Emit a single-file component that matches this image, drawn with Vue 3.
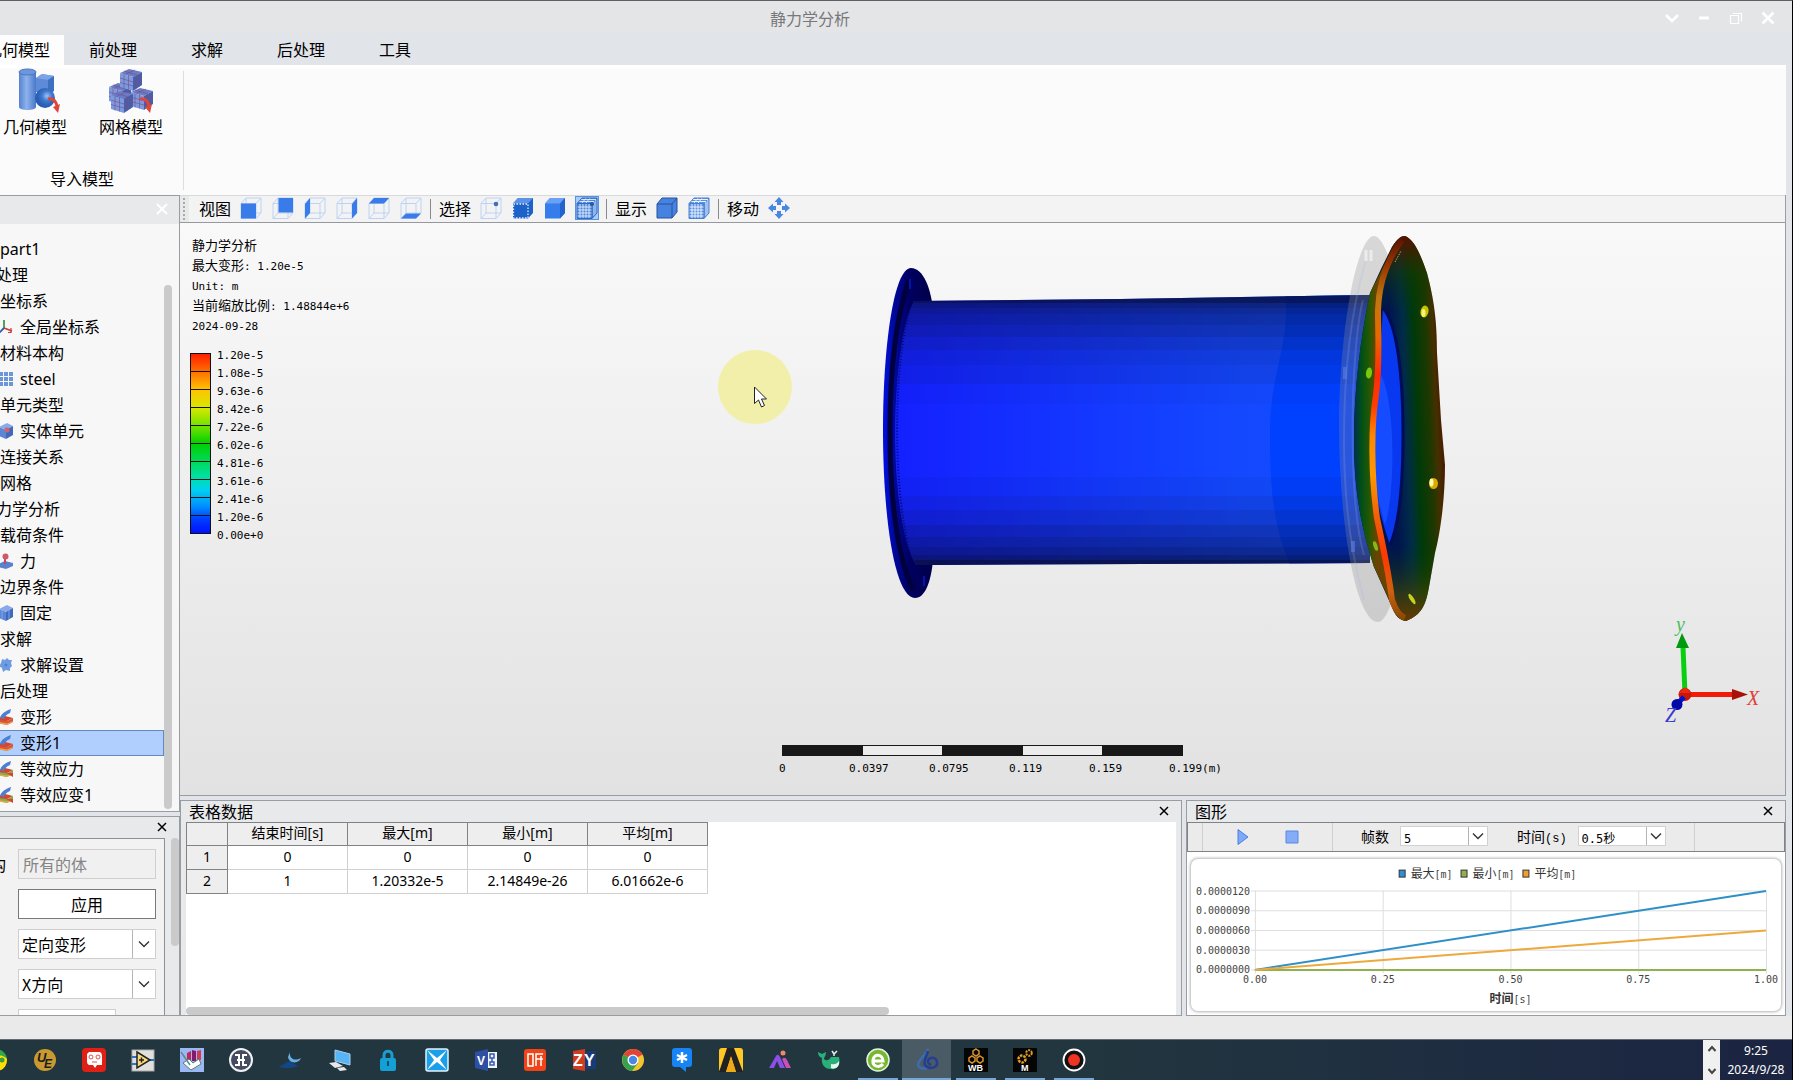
<script setup>
import { ref } from 'vue';

const tabs = ['几何模型', '前处理', '求解', '后处理', '工具'];
const activeTab = ref('几何模型');

const cubeViews = [
  { id: 'front', label: '前视图', face: 'M1 6.5H16V21.5H1Z' },
  { id: 'back', label: '后视图', face: 'M6.5 1H21V15.5H6.5Z' },
  { id: 'left', label: '左视图', face: 'M1 7L6 1V16L1 21.5Z' },
  { id: 'right', label: '右视图', face: 'M16 7L21 1V16L16 21.5Z' },
  { id: 'top', label: '俯视图', face: 'M1 6.5L6 1H21L16 6.5Z' },
  { id: 'bottom', label: '仰视图', face: 'M1 21.5L6 16.5H21L16 21.5Z' },
];

const tree = [
  { text: 'part1', level: 2 },
  { text: '前处理', level: 1 },
  { text: '坐标系', level: 2 },
  { text: '全局坐标系', level: 3, icon: 'axis' },
  { text: '材料本构', level: 2 },
  { text: 'steel', level: 3, icon: 'grid' },
  { text: '单元类型', level: 2 },
  { text: '实体单元', level: 3, icon: 'solid' },
  { text: '连接关系', level: 2 },
  { text: '网格', level: 2 },
  { text: '静力学分析', level: 1 },
  { text: '载荷条件', level: 2 },
  { text: '力', level: 3, icon: 'force' },
  { text: '边界条件', level: 2 },
  { text: '固定', level: 3, icon: 'fixed' },
  { text: '求解', level: 2 },
  { text: '求解设置', level: 3, icon: 'gear' },
  { text: '后处理', level: 2 },
  { text: '变形', level: 3, icon: 'result' },
  { text: '变形1', level: 3, icon: 'result' },
  { text: '等效应力', level: 3, icon: 'rainbow' },
  { text: '等效应变1', level: 3, icon: 'rainbow' },
];
const selected = ref('变形1');

const info = [
  { label: '静力学分析', value: '' },
  { label: '最大变形', value: ': 1.20e-5' },
  { label: '', value: 'Unit: m' },
  { label: '当前缩放比例', value: ': 1.48844e+6' },
  { label: '', value: '2024-09-28' },
];

const legend = ['1.20e-5', '1.08e-5', '9.63e-6', '8.42e-6', '7.22e-6', '6.02e-6', '4.81e-6', '3.61e-6', '2.41e-6', '1.20e-6', '0.00e+0'];

// shading strips of the pipe wall: top, height, darkness
const bands = [
  [295, 8, 0.78],
  [303, 5, 0.6],
  [308, 6, 0.5],
  [314, 11, 0.42],
  [325, 12, 0.34],
  [337, 13, 0.25],
  [350, 15, 0.17],
  [365, 19, 0.11],
  [384, 20, 0.03],
  [477, 19, 0.05],
  [496, 14, 0.13],
  [510, 15, 0.22],
  [525, 12, 0.33],
  [537, 10, 0.42],
  [547, 8, 0.52],
  [555, 5, 0.65],
  [560, 8, 0.82],
];

const scaleLabels = ['0.0397', '0.0795', '0.119', '0.159', '0.199(m)'];

const columns = ['结束时间[s]', '最大[m]', '最小[m]', '平均[m]'];
const rows = [
  ['0', '0', '0', '0'],
  ['1', '1.20332e-5', '2.14849e-26', '6.01662e-6'],
];

const series = [
  { name: '最大[m]', color: '#2f8fd0', x: 208 },
  { name: '最小[m]', color: '#8fb150', x: 270 },
  { name: '平均[m]', color: '#eda02f', x: 332 },
];
const yTicks = ['0.0000120', '0.0000090', '0.0000060', '0.0000030', '0.0000000'];
const xTicks = ['0.00', '0.25', '0.50', '0.75', '1.00'];

const scope = ref('所有的体');
const frames = ref('5');
const duration = ref('0.5秒');
const kind = ref('定向变形');
const direction = ref('X方向');
</script>

<template>
  <div class="app">
    <header class="titlebar">
      <h1>静力学分析</h1>
      <div class="window-buttons">
        <button type="button" aria-label="收起"><svg viewBox="0 0 16 16"><path d="M2 5L8 11L14 5" stroke-width="2.6" /></svg></button>
        <button type="button" aria-label="最小化"><svg viewBox="0 0 16 16"><path d="M3 8H13" stroke-width="3" /></svg></button>
        <button type="button" aria-label="还原"><svg viewBox="0 0 16 16"><path d="M2.5 5.5h8v8h-8zM5 3.5h8.500v8" stroke-width="1.200" /></svg></button>
        <button type="button" aria-label="关闭"><svg viewBox="0 0 16 16"><path d="M2.500 2.500L13.500 13.500M13.500 2.500L2.500 13.500" stroke-width="2.600" /></svg></button>
      </div>
    </header>

    <nav class="tabs">
      <button
        v-for="tab in tabs"
        :key="tab"
        type="button"
        class="tab"
        :class="{ active: tab === activeTab }"
        @click="activeTab = tab"
      >{{ tab }}</button>
    </nav>

    <section class="ribbon">
      <div class="ribbon-group">
        <div class="ribbon-items">
          <button type="button" class="ribbon-item">
            <svg viewBox="0 0 46 48">
              <defs>
                <linearGradient id="cyl"><stop offset="0" stop-color="#5582cf" /><stop offset=".45" stop-color="#8db2ec" /><stop offset="1" stop-color="#4a78c8" /></linearGradient>
                <radialGradient id="ball" cx=".6" cy=".4"><stop offset="0" stop-color="#9cc4f5" /><stop offset=".5" stop-color="#3f78cc" /><stop offset="1" stop-color="#285eb4" /></radialGradient>
              </defs>
              <path d="M20 11L26 7L38 9V24L32 27L20 25Z" fill="#5d8bd8" />
              <path d="M20 11L26 7L38 9L32 13Z" fill="#7ba3e6" />
              <path d="M32 13L38 9V24L32 27Z" fill="#3f6fc0" />
              <path d="M3 5V40C3 44 20 44 20 40V5Z" fill="url(#cyl)" />
              <ellipse cx="11.500" cy="5" rx="8.500" ry="3" fill="#6c97dc" stroke="#4a76c2" />
              <circle cx="29" cy="31" r="10" fill="url(#ball)" />
              <path d="M32 32C38 31 40 35 41 39" fill="none" stroke="#e0453a" stroke-width="3" />
              <path d="M37 40L44 37L42 46Z" fill="#e0453a" />
            </svg>
            <span>几何模型</span>
          </button>
          <button type="button" class="ribbon-item">
            <svg viewBox="0 0 46 48">
              <g v-for="c in [[1, 16], [12, 2], [23, 21], [3, 24]]" :key="c.join()" :transform="`translate(${c[0]} ${c[1]})`">
                <path d="M0 4L9 0L22 3L13 8Z" fill="#6a7cc4" />
                <path d="M0 4L13 8V22L0 18Z" fill="#7b9ae0" />
                <path d="M13 8L22 3V16L13 22Z" fill="#4560ac" />
                <path d="M4 5V19.500M8.500 6V20.500M0 9L13 13L22 8M0 13.500L13 17L22 12M16 6V20M19 5V18M4 2L17 6M5 5.500L15 1" fill="none" stroke="#7a4a86" stroke-width=".8" opacity=".75" />
              </g>
              <path d="M32 32C38 31 40 35 41 39" fill="none" stroke="#e0453a" stroke-width="3" />
              <path d="M37 40L44 37L42 46Z" fill="#e0453a" />
            </svg>
            <span>网格模型</span>
          </button>
        </div>
        <div class="ribbon-caption">导入模型</div>
      </div>
    </section>

    <main class="workspace">
      <aside class="side">
        <section class="dock tree-dock">
          <header class="dock-title pale">
            <button type="button" class="close" aria-label="关闭模型树"><svg viewBox="0 0 12 12"><path d="M1 1L11 11M11 1L1 11" /></svg></button>
          </header>
          <div class="tree-area">
            <ul class="tree">
              <li
                v-for="node in tree"
                :key="node.text + node.level"
                :class="['level-' + node.level, { selected: node.text === selected }]"
                @click="selected = node.text"
              >
                <svg v-if="node.icon" viewBox="0 0 16 16">
                  <g v-if="node.icon === 'axis'" fill="none" stroke-width="1.800">
                    <path d="M6 1V9" stroke="#3a9a50" /><path d="M6 9L14 12" stroke="#cc3c34" /><path d="M6 9L1 14" stroke="#3858b8" />
                    <path d="M13 9V13.500H10" stroke="#cc3c34" stroke-width="1.200" />
                  </g>
                  <path v-else-if="node.icon === 'grid'" d="M1 1h4v4h-4zM6 1h4v4h-4zM11 1h4v4h-4zM1 6h4v4h-4zM6 6h4v4h-4zM11 6h4v4h-4zM1 11h4v4h-4zM6 11h4v4h-4zM11 11h4v4h-4z" fill="#6d96d8" />
                  <g v-else-if="node.icon === 'solid' || node.icon === 'fixed'">
                    <path d="M1 4L9 0L15 3L8 7Z" fill="#88aae8" /><path d="M1 4L8 7V16L1 13Z" fill="#5b86d6" /><path d="M8 7L15 3V12L8 16Z" fill="#4168bc" />
                    <circle v-if="node.icon === 'solid'" cx="9" cy="7" r="2.500" fill="#d4606c" />
                    <path v-else d="M4 5V14M11 5V14" stroke="#7fa5ea" />
                  </g>
                  <g v-else-if="node.icon === 'force'">
                    <path d="M0 11L7 8L15 10V13L8 16L0 14Z" fill="#5a82ce" /><path d="M7 5V11" stroke="#c04c5c" stroke-width="2" /><circle cx="7.500" cy="3.500" r="3" fill="#d05868" />
                  </g>
                  <g v-else-if="node.icon === 'gear'">
                    <path d="M4 2L7 3L9 1L11 3L14 3L13 6L14 9L12 11L12 14L8 13L5 15L4 11L1 9L3 6Z" fill="#6f9ce0" /><circle cx="8" cy="8" r="1.500" fill="#4f7fcf" />
                  </g>
                  <g v-else>
                    <path d="M0 9L7 7L15 9L9 12L0 12Z" fill="#d8442e" />
                    <path d="M0 11L9 12L15 9V13L9 16L0 14Z" :fill="node.icon === 'result' ? '#d8583a' : '#7fae4c'" />
                    <path d="M0 13L9 14.500L15 12V13L9 16L0 14.500Z" fill="#e8a850" />
                    <path v-if="node.icon === 'rainbow'" d="M8 12L15 12V16Z" fill="#d8442e" />
                    <path d="M2 9C3 5 7 2 13 0L12 4C9 5 7 7 6 10Z" fill="#4f7fcf" />
                  </g>
                </svg>
                <span>{{ node.text }}</span>
              </li>
            </ul>
            <div class="tree-scroll"></div>
          </div>
        </section>

        <section class="dock props-dock">
          <header class="dock-title">
            <button type="button" class="close" aria-label="关闭属性"><svg viewBox="0 0 12 12"><path d="M2 2L10 10M10 2L2 10" /></svg></button>
          </header>
          <div class="props-area">
            <form class="props" @submit.prevent>
              <label for="scope">结构</label>
              <input id="scope" v-model="scope" class="field" type="text" disabled />
              <button type="submit" class="field apply">应用</button>
              <div class="combo field">
                <select v-model="kind" aria-label="变形类型"><option>定向变形</option></select>
                <svg viewBox="0 0 14 14"><path d="M2 4.500L7 9.500L12 4.500" /></svg>
              </div>
              <div class="combo field">
                <select v-model="direction" aria-label="方向"><option>X方向</option></select>
                <svg viewBox="0 0 14 14"><path d="M2 4.500L7 9.500L12 4.500" /></svg>
              </div>
              <input class="field short" type="text" aria-label="数值" />
            </form>
            <div class="props-scroll"></div>
          </div>
        </section>
      </aside>

      <div class="center">
        <section class="viewport">
          <div class="toolbar">
            <i class="grip"></i>
            <span class="tool-label">视图</span>
            <button v-for="view in cubeViews" :key="view.id" type="button" class="tool" :aria-label="view.label">
              <svg viewBox="0 0 22 22">
                <path class="wire" d="M1 6.500H16V21.500H1ZM6 1H21V16H6ZM1 6.500L6 1M16 6.500L21 1M16 21.500L21 16M1 21.500L6 16" />
                <path :d="view.face" fill="#3a7bea" />
              </svg>
            </button>
            <i class="divider"></i>
            <span class="tool-label">选择</span>
            <button type="button" class="tool" aria-label="选择点">
              <svg viewBox="0 0 22 22">
                <path class="wire" d="M1 6.500H16V21.500H1ZM6 1H21V16H6ZM1 6.500L6 1M16 6.500L21 1M16 21.500L21 16M1 21.500L6 16" />
                <circle cx="16" cy="7" r="2.300" fill="#3f6fc0" />
              </svg>
            </button>
            <button type="button" class="tool" aria-label="选择线">
              <svg viewBox="0 0 22 22">
                <path d="M1 6.500L6 1H21V16L16 21.500H1Z" fill="#1d62c8" /><path d="M1 6.500L6 1H21L16 6.500Z" fill="#5c93e6" />
                <path d="M1.500 7H16V21H1.500Z" fill="none" stroke="#e6f0ff" stroke-width="1.300" stroke-dasharray="1.500 1.500" />
              </svg>
            </button>
            <button type="button" class="tool" aria-label="选择面">
              <svg viewBox="0 0 22 22">
                <path d="M1 6.500L6 1H21V16L16 21.500H1Z" fill="#357ced" /><path d="M1 6.500L6 1H21L16 6.500Z" fill="#6ba0f4" /><path d="M16 6.500L21 1V16L16 21.500Z" fill="#2563cc" />
              </svg>
            </button>
            <button type="button" class="tool pressed" aria-label="选择体">
              <svg viewBox="0 0 22 22">
                <path d="M1 6.500L6 1H21V16L16 21.500H1Z" fill="#4d86dd" />
                <path d="M4 7V21M7 7V21M10 7V21M13 7V21M1 10H16M1 13H16M1 16H16M1 19H16M3 4.500H18M5 2.500H20M18 5V19M20 3V17M6 6L10 1M10 6L14 1" fill="none" stroke="#e3eefc" stroke-width=".9" />
                <path d="M1 6.500L6 1H21V16L16 21.500H1ZM1 6.500H16V21.500" fill="none" stroke="#2f6bc7" /><circle cx="16" cy="7" r="2" fill="#2458a8" />
              </svg>
            </button>
            <i class="divider"></i>
            <span class="tool-label">显示</span>
            <button type="button" class="tool" aria-label="实体显示">
              <svg viewBox="0 0 22 22"><path d="M1 7L6 1H21V15L16 21H1Z" fill="#4682e0" stroke="#28539c" stroke-linejoin="round" /><path d="M1 7H16V21M16 7L21 1" fill="none" stroke="#28539c" /></svg>
            </button>
            <button type="button" class="tool" aria-label="网格显示">
              <svg viewBox="0 0 22 22">
                <path d="M1 6.500L6 1H21V16L16 21.500H1Z" fill="#5b90e2" />
                <path d="M4 7V21M7 7V21M10 7V21M13 7V21M1 10H16M1 13H16M1 16H16M1 19H16M3 4.500H18M5 2.500H20M18 5V19M20 3V17M6 6L10 1M10 6L14 1" fill="none" stroke="#e9f2fe" />
                <path d="M1 6.500L6 1H21V16L16 21.500H1ZM1 6.500H16V21.500" fill="none" stroke="#4a80d2" />
              </svg>
            </button>
            <i class="divider"></i>
            <span class="tool-label">移动</span>
            <button type="button" class="tool" aria-label="平移">
              <svg viewBox="0 0 22 22"><path d="M11 0L15.500 5H13V8H9V5H6.500ZM11 22L15.500 17H13V14H9V17H6.500ZM0 11L5 6.500V9H8V13H5V15.500ZM22 11L17 6.500V9H14V13H17V15.500Z" fill="#4a86e4" /></svg>
            </button>
          </div>

          <div class="canvas">
            <svg class="scene" viewBox="180 223 1605 572" preserveAspectRatio="xMidYMid meet">
              <defs>
                <linearGradient id="wall"><stop offset="0" stop-color="#1420ff" /><stop offset=".7" stop-color="#1448ff" /><stop offset="1" stop-color="#1450ff" /></linearGradient>
                <linearGradient id="flangeEdge" gradientUnits="userSpaceOnUse" x1="883" x2="935" y1="0" y2="0"><stop offset="0" stop-color="#0010e8" /><stop offset=".2" stop-color="#0008a0" /><stop offset=".5" stop-color="#000060" /><stop offset="1" stop-color="#000048" /></linearGradient>
                <linearGradient id="face" gradientUnits="userSpaceOnUse" x1="1394" x2="1444" y1="430" y2="428"><stop offset="0" stop-color="#001450" /><stop offset=".26" stop-color="#002c48" /><stop offset=".48" stop-color="#003a08" /><stop offset=".72" stop-color="#1e3800" /><stop offset=".86" stop-color="#453000" /><stop offset="1" stop-color="#4a1600" /></linearGradient>
                <linearGradient id="ends" x1="0" x2="0" y1="0" y2="1"><stop offset="0" stop-color="#5a1000" /><stop offset=".1" stop-color="#183800" stop-opacity=".5" /><stop offset=".2" stop-color="#003a08" stop-opacity="0" /><stop offset=".8" stop-color="#003a08" stop-opacity="0" /><stop offset=".93" stop-color="#404400" stop-opacity=".7" /><stop offset="1" stop-color="#6a3800" /></linearGradient>
                <linearGradient id="lip" gradientUnits="userSpaceOnUse" x1="1354" x2="1376" y1="0" y2="0"><stop offset="0" stop-color="#00304c" /><stop offset=".35" stop-color="#005018" /><stop offset=".75" stop-color="#2c5800" /><stop offset="1" stop-color="#684400" /></linearGradient>
                <linearGradient id="rim" gradientUnits="userSpaceOnUse" x1="0" x2="0" y1="236" y2="621"><stop offset="0" stop-color="#5a1000" /><stop offset=".08" stop-color="#983800" /><stop offset=".16" stop-color="#c07810" /><stop offset=".26" stop-color="#e86800" /><stop offset=".36" stop-color="#ff2a08" /><stop offset=".44" stop-color="#ff3c00" /><stop offset=".52" stop-color="#ff8800" /><stop offset=".62" stop-color="#ff9800" /><stop offset=".73" stop-color="#f06008" /><stop offset=".83" stop-color="#ff3800" /><stop offset=".92" stop-color="#d06010" /><stop offset="1" stop-color="#804800" /></linearGradient>
                <clipPath id="pipe"><path d="M914 301L1120 299L1370 295V563L934 565H916C903 545 895 490 895 430C896 370 903 320 914 301Z" /></clipPath>
              </defs>

              <path d="M911 268C923 268 931 288 933 310V560C931 582 925 598 915 598C895 598 883 520 883 430C883 345 894 268 911 268Z" fill="url(#flangeEdge)" />
              <path d="M909 280C895 320 890 370 890 430C890 500 897 555 913 590" fill="none" stroke="#00003c" stroke-width="5" />
              <path d="M910 279V289M924 576V586" stroke="#0012b0" stroke-width="2" />
              <g clip-path="url(#pipe)">
                <rect x="890" y="290" width="490" height="280" fill="url(#wall)" />
                <path d="M1285 290C1291 345 1270 370 1270 433C1270 500 1275 530 1292 570H1380V290Z" fill="#0040ff" />
                <rect v-for="band in bands" :key="band[0]" x="890" :y="band[0]" width="490" :height="band[1]" fill="#080c30" :opacity="band[2]" />
                <path d="M912 303C892 360 892 500 913 563" fill="none" stroke="#000a70" stroke-width="2" stroke-dasharray="1 2" />
              </g>

              <path d="M1374 236C1390 236 1413 330 1413 430C1413 530 1394 622 1378 622C1355 622 1339 520 1339 425C1339 330 1357 236 1374 236Z" fill="#8c8c90" opacity=".3" />
              <path d="M1366 260C1348 320 1344 390 1344 440C1344 500 1350 550 1364 600M1363 300C1350 350 1348 500 1364 555" fill="none" stroke="#a0b4e8" stroke-width="2" opacity=".2" />
              <path d="M1366 250V261M1371 250V261" stroke="#ececec" stroke-width="3" />
              <path d="M1345 367V379M1353 541V552" stroke="#5a80e0" stroke-width="4" opacity=".6" />

              <path d="M1405 236C1413 239 1419 250 1427 273C1434 300 1437 320 1437 353L1441 420L1445 465C1445 500 1440 535 1435 553L1429 587C1426 604 1422 615 1406 621C1397 620 1394 612 1392 607L1374 567C1364 535 1354 500 1354 440C1354 390 1360 340 1370 293L1382 267L1392 247C1397 239 1401 236 1405 236Z" fill="url(#face)" />
              <path d="M1405 236C1413 239 1419 250 1427 273C1434 300 1437 320 1437 353L1441 420L1445 465C1445 500 1440 535 1435 553L1429 587C1426 604 1422 615 1406 621C1397 620 1394 612 1392 607L1374 567C1364 535 1354 500 1354 440C1354 390 1360 340 1370 293L1382 267L1392 247C1397 239 1401 236 1405 236Z" fill="url(#ends)" />
              <path d="M1392 250L1370 293C1360 340 1354 390 1354 440C1354 500 1364 535 1374 567L1392 605C1390 570 1372 520 1371 460C1370 410 1378 390 1377 340C1376 300 1384 270 1392 250Z" fill="url(#lip)" />
              <path d="M1383 308C1398 325 1403 380 1403 433C1403 490 1399 525 1390 545C1382 520 1374 500 1373 450C1374 420 1378 395 1379 370Z" fill="#0838f0" />
              <path d="M1381 375C1395 400 1396 490 1385 525C1378 500 1374 480 1374 450C1374 420 1378 400 1381 375Z" fill="#164cff" />
              <path d="M1383 308C1398 325 1403 380 1403 433C1403 490 1399 525 1390 545" fill="none" stroke="#000c58" stroke-width="3" />
              <path d="M1402 240C1390 256 1379 280 1378 310C1378 335 1380 365 1376 395C1371 425 1371 475 1377 518C1385 555 1389 575 1392 600C1395 609 1400 616 1405 618" fill="none" stroke="url(#rim)" stroke-width="6" />
              <path d="M1395 262L1401 251" stroke="#d8c050" stroke-dasharray="1 1" />
              <ellipse cx="1424.500" cy="311.500" rx="4" ry="6" fill="#c8c000" transform="rotate(12 1424.500 311.500)" />
              <ellipse cx="1423.500" cy="313" rx="2" ry="4" fill="#f4f478" />
              <ellipse cx="1433.500" cy="483.500" rx="4.500" ry="5.500" fill="#e0a800" />
              <ellipse cx="1431.500" cy="482.500" rx="2" ry="4" fill="#ffffb0" />
              <ellipse cx="1369" cy="373" rx="3" ry="5.500" fill="#78c810" transform="rotate(8 1369 373)" />
              <ellipse cx="1375.500" cy="546" rx="2" ry="5" fill="#88b818" transform="rotate(-18 1375.500 546)" />
              <ellipse cx="1412" cy="599" rx="2" ry="6" fill="#c8d020" transform="rotate(-32 1412 599)" />

              <circle cx="755" cy="387" r="37" fill="#f2efab" />
              <path d="M754.500 387V403.500L758.500 400L761.500 407L764.500 405.500L761.500 399H766.500Z" fill="#fff" stroke="#222" />

              <g>
                <path d="M1683 647L1685 694" stroke="#08d010" stroke-width="5" />
                <path d="M1682 633L1689 648H1676Z" fill="#009a10" />
                <path d="M1685 694.500H1735" stroke="#f01c08" stroke-width="5" />
                <path d="M1732 689L1748 694.500L1732 700Z" fill="#a81008" />
                <circle cx="1685" cy="694.500" r="6.500" fill="#c81808" /><path d="M1679 693L1685 687L1691 693Z" fill="#f02810" />
                <path d="M1684 697L1677 704" stroke="#0014d0" stroke-width="5" />
                <circle cx="1677" cy="704.500" r="5.500" fill="#0008a8" />
                <text class="axis-name" x="1676" y="631" fill="#48c060">y</text>
                <text class="axis-name" x="1747" y="705" fill="#e04038">X</text>
                <text class="axis-name" x="1665" y="722" fill="#3838d0">Z</text>
              </g>

              <g>
                <rect x="782" y="745" width="401" height="11" fill="#181818" />
                <path d="M863 746H942V755H863ZM1023 746H1102V755H1023Z" fill="#ececec" />
                <text class="scale-text" x="779" y="772">0</text>
                <text v-for="(label, i) in scaleLabels" :key="label" class="scale-text" :x="849 + i * 80" y="772">{{ label }}</text>
              </g>
            </svg>

            <div class="overlay">
              <p v-for="(line, i) in info" :key="i"><span>{{ line.label }}</span><b>{{ line.value }}</b></p>
              <div class="legend">
                <div class="ramp"><i v-for="n in 10" :key="n"></i></div>
                <ol><li v-for="value in legend" :key="value">{{ value }}</li></ol>
              </div>
            </div>
          </div>
        </section>

        <div class="bottom">
          <section class="dock table-dock">
            <header class="dock-title">
              <h2>表格数据</h2>
              <button type="button" class="close" aria-label="关闭表格数据"><svg viewBox="0 0 12 12"><path d="M2 2L10 10M10 2L2 10" /></svg></button>
            </header>
            <div class="table-area">
              <table>
                <thead>
                  <tr><th class="index"></th><th v-for="column in columns" :key="column">{{ column }}</th></tr>
                </thead>
                <tbody>
                  <tr v-for="(row, i) in rows" :key="i">
                    <th class="index">{{ i + 1 }}</th>
                    <td v-for="(cell, j) in row" :key="j">{{ cell }}</td>
                  </tr>
                </tbody>
              </table>
              <div class="table-scroll"></div>
            </div>
          </section>

          <section class="dock chart-dock">
            <header class="dock-title">
              <h2>图形</h2>
              <button type="button" class="close" aria-label="关闭图形"><svg viewBox="0 0 12 12"><path d="M2 2L10 10M10 2L2 10" /></svg></button>
            </header>
            <div class="player">
              <div class="player-buttons">
                <button type="button" aria-label="播放"><svg viewBox="0 0 18 18"><path d="M4 1.500L14 9L4 16.500Z" fill="#7ea8f8" stroke="#4a80e0" /></svg></button>
                <button type="button" aria-label="停止"><svg viewBox="0 0 18 18"><path d="M3 3H15V15H3Z" fill="#84acf8" stroke="#5a88e0" /></svg></button>
              </div>
              <div class="player-fields">
                <label for="frames">帧数</label>
                <div class="combo small">
                  <select id="frames" v-model="frames"><option>5</option></select>
                  <svg viewBox="0 0 14 14"><path d="M2 4.500L7 9.500L12 4.500" /></svg>
                </div>
                <label for="duration" class="second">时间<span>(s)</span></label>
                <div class="combo small">
                  <select id="duration" v-model="duration"><option>0.5秒</option></select>
                  <svg viewBox="0 0 14 14"><path d="M2 4.500L7 9.500L12 4.500" /></svg>
                </div>
              </div>
            </div>
            <div class="chart-card">
              <svg viewBox="0 0 591 151">
                <g v-for="s in series" :key="s.name">
                  <rect :x="s.x + 0.5" y="10.500" width="6" height="7" :fill="s.color" stroke="#333" />
                  <text :x="s.x + 12" y="18" class="legend-text">{{ s.name.slice(0, 2) }}<tspan class="mono">{{ s.name.slice(2) }}</tspan></text>
                </g>
                <g v-for="(tick, i) in yTicks" :key="tick">
                  <path :d="`M60 ${31.5 + i * 19.75}H576`" stroke="#dedede" />
                  <text class="mono" x="59" :y="35 + i * 19.75" text-anchor="end">{{ tick }}</text>
                </g>
                <g v-for="(tick, i) in xTicks" :key="tick">
                  <path :d="`M${64.5 + i * 128} 31V114`" stroke="#dedede" />
                  <text class="mono" :x="64 + i * 128" y="124" text-anchor="middle">{{ tick }}</text>
                </g>
                <path d="M64 110.500L576 31.500" stroke="#2f8fc8" stroke-width="2" />
                <path d="M64 110.500H576" stroke="#8fb150" stroke-width="2" />
                <path d="M64 110.500L576 71" stroke="#eda93c" stroke-width="2" />
                <text class="legend-text bold" x="320" y="144" text-anchor="middle">时间<tspan class="mono">[s]</tspan></text>
              </svg>
            </div>
          </section>
        </div>
      </div>
    </main>

    <div class="statusbar"></div>

    <footer class="taskbar">
      <div class="apps">
        <button type="button" aria-label="360"><svg viewBox="0 0 24 24"><circle cx="12" cy="12" r="11" fill="#2fa84c" /><path d="M4 14C10 6 18 6 23 11C23 18 19 23 12 23C8 22 5 19 4 14Z" fill="#ffe000" /><circle cx="18" cy="12" r="2.500" fill="#3c9c40" /></svg></button>
        <button type="button" aria-label="UltraEdit"><svg viewBox="0 0 24 24"><circle cx="12" cy="12" r="11" fill="#c89a30" /><text x="4" y="14" class="glyph italic" font-size="13">U</text><text x="11" y="20" class="glyph italic" font-size="12">E</text></svg></button>
        <button type="button" aria-label="笔记"><svg viewBox="0 0 24 24"><rect width="24" height="24" rx="4" fill="#e02014" /><path d="M7 4H18Q20 5 20 8V17H15L13 20L11 17H7Q5 16 5 14V6Z" fill="#fff" /><circle cx="9" cy="9" r="2" fill="none" stroke="#e05048" /><circle cx="16" cy="9" r="2" fill="none" stroke="#e05048" /><path d="M10 14H15" stroke="#e05048" /></svg></button>
        <button type="button" aria-label="LabVIEW"><svg viewBox="0 0 24 24"><rect x="1" y="2" width="22" height="21" fill="#e0e0dc" stroke="#aaa" /><path d="M1 9H6M1 16H6M17 12H23" stroke="#2a74c8" stroke-width="2" /><path d="M6 4L19 12L6 20Z" fill="#f8d878" stroke="#222" stroke-width="1.500" /><path d="M8 12h5M10.500 9.500v5" stroke="#222" stroke-width="1.500" /></svg></button>
        <button type="button" aria-label="书库"><svg viewBox="0 0 24 24"><rect width="24" height="24" fill="#9cb8f4" /><path d="M7 5L11 3V13L7 14Z" fill="#c02858" /><path d="M12 2L16 3V13H12Z" fill="#801c70" /><path d="M17 3L21 2V12H17Z" fill="#d83850" /><path d="M3 15L9 11L13 15L19 11L21 16L11 22Z" fill="#fff" stroke="#55806c" /><path d="M1 4L10 17" stroke="#608898" stroke-width="1.500" /></svg></button>
        <button type="button" aria-label="网络"><svg viewBox="0 0 24 24"><circle cx="12" cy="12" r="11" fill="#454c60" stroke="#f0f2f4" stroke-width="2" /><path d="M6 7H10V12M18 7H14V12M6 17H10V12M18 17H14V12M8 12H16" fill="none" stroke="#fff" stroke-width="2" /></svg></button>
        <button type="button" aria-label="雷鸟"><svg viewBox="0 0 24 24"><path d="M0 19C6 17 8 14 12 13L20 18C14 21 6 20 0 19Z" fill="#124684" /><path d="M12 4C11 10 16 14 23 10C21 16 11 16 10 9Z" fill="#6ab0e4" /></svg></button>
        <button type="button" aria-label="远程桌面"><svg viewBox="0 0 24 24"><path d="M8 2L23 6V17L8 13Z" fill="#58b4f4" stroke="#a8d0ec" /><path d="M2 15L9 14L16 18L8 20ZM10 20L17 19L20 22L13 23Z" fill="#e6e8ea" /></svg></button>
        <button type="button" aria-label="加密"><svg viewBox="0 0 24 24"><path d="M8 11V7C8 2 16 2 16 7V11" fill="none" stroke="#1a9ed0" stroke-width="3" /><rect x="4" y="10" width="16" height="13" rx="2" fill="#14a0d4" /><path d="M12 13V18" stroke="#0a5070" stroke-width="2" /></svg></button>
        <button type="button" aria-label="xmind"><svg viewBox="0 0 24 24"><rect x="1" y="1" width="22" height="22" rx="2" fill="#1aa0e8" stroke="#e4f4ff" stroke-width="1.500" /><path d="M2 2L12 10L22 2L15 12L22 22L12 14L2 22L9 12Z" fill="#fff" /></svg></button>
        <button type="button" aria-label="Visio"><svg viewBox="0 0 24 24"><path d="M13 4H23V20H13Z" fill="#f0f4fc" /><path d="M16 6h4v4h-4zM18 10v4M16 14h4v3h-4z" fill="none" stroke="#3a5ab0" stroke-width="1.500" /><path d="M1 4L14 1V23L1 20Z" fill="#2f4fa2" /><text x="3" y="17" class="glyph white" font-size="12">V</text></svg></button>
        <button type="button" aria-label="阅读"><svg viewBox="0 0 24 24"><rect x="1" y="1" width="22" height="22" rx="3" fill="#f04418" /><path d="M5 6V18H10V6ZM13 18V6H20M13 11H20M18 8V18" fill="none" stroke="#fff" stroke-width="1.500" /></svg></button>
        <button type="button" aria-label="ZY"><svg viewBox="0 0 24 24"><path d="M1 3L13 1V23L1 21Z" fill="#d43c20" /><path d="M13 3H24V21H13Z" fill="#173a78" /><text x="1" y="18" class="glyph white" font-size="16">Z</text><text x="12" y="18" class="glyph white" font-size="16">Y</text></svg></button>
        <button type="button" aria-label="Chrome"><svg viewBox="0 0 24 24"><circle cx="12" cy="12" r="11" fill="#f4c430" /><path d="M12 12L2.500 6.500C7 -1 18 -1 21.500 6.500Z" fill="#e04438" /><path d="M12 12L2.500 6.500C-1 13 3 22 11 23L17 15Z" fill="#38a050" /><circle cx="12" cy="12" r="5.500" fill="#fff" /><circle cx="12" cy="12" r="4.200" fill="#4a88e8" /></svg></button>
        <button type="button" aria-label="星聊"><svg viewBox="0 0 24 24"><path d="M5 0H19Q22 0 22 3V16Q22 19 19 19H16V24L10 19H5Q2 19 2 16V3Q2 0 5 0Z" fill="#1684f4" /><path d="M12 4V15M7 7L17 12M17 7L7 12" stroke="#fff" stroke-width="2.500" /></svg></button>
        <button type="button" aria-label="ANSYS"><svg viewBox="0 0 24 24"><rect width="24" height="24" rx="3" fill="#ffc824" /><path d="M8 0H15L24 24H17L12 8L7 24H0Z" fill="#222" /><path d="M12 9L17 24H7Z" fill="#f0a814" /></svg></button>
        <button type="button" aria-label="设计"><svg viewBox="0 0 24 24"><path d="M1 20L8 8Q10 5 12 9L17 20H12L9 13L6 20Z" fill="#8c50e8" /><path d="M14 11Q17 8 19 12L23 20H18Z" fill="#c850b8" /><circle cx="15" cy="5" r="2.500" fill="#f08868" /></svg></button>
        <button type="button" aria-label="鲸鱼"><svg viewBox="0 0 24 24"><path d="M1 4L5 6L9 4C9 8 7 9 7 11C10 14 13 11 14 9H22C24 17 20 22 14 21C7 21 4 16 5 10C2 9 1 7 1 4Z" fill="#28b078" /><path d="M14 16C18 17 21 15 22 13C23 18 19 22 14 20Z" fill="#e8f4ee" /><path d="M15 3L17 6L20 3M17 6V8" fill="none" stroke="#e4eef0" stroke-width="1.500" /></svg></button>
        <button type="button" class="running" aria-label="浏览器"><svg viewBox="0 0 24 24"><circle cx="12" cy="12" r="11" fill="#78b830" stroke="#e4f4e0" stroke-width="1.500" /><path d="M7 13H17C17 6 8 5 7 12C6 19 14 20 17 16" fill="none" stroke="#fff" stroke-width="3" /></svg></button>
        <button type="button" class="running current" aria-label="静力学分析"><svg viewBox="0 0 24 24"><path d="M13 1C12 7 3 11 3 17C4 21 9 21 12 20" fill="none" stroke="#3c6cae" stroke-width="2.500" /><path d="M13 3C12 8 8 12 10 17C14 22 23 20 22 14C21 9 17 9 14 11C12 13 13 16 16 17" fill="none" stroke="#243e94" stroke-width="2.500" /></svg></button>
        <button type="button" class="running" aria-label="Workbench"><svg viewBox="0 0 24 24"><rect width="24" height="24" fill="#050505" /><path d="M12 1L15 3V6L12 8L9 6V3ZM8 8L11 10V13L8 15L5 13V10ZM16 8L19 10V13L16 15L13 13V10Z" fill="none" stroke="#d8922c" stroke-width="1.500" /><text x="4" y="23" class="glyph white" font-size="9">WB</text></svg></button>
        <button type="button" class="running" aria-label="Mechanical"><svg viewBox="0 0 24 24"><rect width="24" height="24" fill="#050505" /><circle cx="9" cy="11" r="3.500" fill="none" stroke="#e8a020" stroke-width="2.500" stroke-dasharray="2.500 1" /><circle cx="16" cy="5" r="2.800" fill="none" stroke="#e8a020" stroke-width="2" stroke-dasharray="2 1" /><text x="8" y="23" class="glyph white" font-size="9">M</text></svg></button>
        <button type="button" class="running" aria-label="录屏"><svg viewBox="0 0 24 24"><circle cx="12" cy="12" r="10.500" fill="#111" stroke="#fff" stroke-width="1.800" /><circle cx="12" cy="12" r="6" fill="#f03424" /></svg></button>
      </div>
      <div class="tray">
        <button type="button" aria-label="向上"><svg viewBox="0 0 12 12"><path d="M2.500 8L6 4L9.500 8" /></svg></button>
        <button type="button" aria-label="向下"><svg viewBox="0 0 12 12"><path d="M2.500 4L6 8L9.500 4" /></svg></button>
      </div>
      <time class="clock"><span>9:25</span><span>2024/9/28</span></time>
    </footer>
  </div>
</template>

<style>
body {
  margin: 0;
  overflow: hidden;
}
</style>

<style scoped>
* {
  box-sizing: border-box;
}

.app {
  height: 100vh;
  display: flex;
  flex-direction: column;
  overflow: hidden;
  border-top: 1px solid #5f5e63;
  border-right: 1px solid #000;
  background: #e1e4e9;
  color: #000;
  font: 16px/20px 'Noto Sans CJK SC', sans-serif;
}

button,
input,
select {
  margin: 0;
  padding: 0;
  border: 0;
  background: none;
  color: inherit;
  font: inherit;
}

h1,
h2,
p,
ul,
ol {
  margin: 0;
  padding: 0;
  font-size: inherit;
  font-weight: 400;
  list-style: none;
}

svg {
  display: block;
}

.titlebar {
  flex: 0 0 32px;
  display: flex;
  align-items: center;
  padding-top: 2px;
  background: #e4e5e7;
}

.titlebar h1 {
  flex: 1;
  color: #77787a;
  text-align: center;
}

.window-buttons {
  display: flex;
  padding: 0 8px 0 36px;
}

.window-buttons button {
  width: 32px;
  display: grid;
  place-items: center;
}

.window-buttons svg {
  width: 16px;
  height: 16px;
  fill: none;
  stroke: #fff;
}

.tabs {
  flex: 0 0 32px;
  display: flex;
  gap: 54px;
  padding-top: 2px;
}

.tab {
  padding-bottom: 2px;
  white-space: nowrap;
}

.tab.active {
  margin: 0 -29px 0 -14px;
  padding-right: 14px;
  background: #fdfdfd;
}

.ribbon {
  flex: 0 0 130px;
  display: flex;
  margin-right: 6px;
  padding: 3px 0 5px;
  border-top: 3px solid #fff;
  background: #fbfbfb;
}

.ribbon-group {
  width: 184px;
  display: flex;
  flex-direction: column;
  justify-content: space-between;
  border-right: 1px solid #dddee0;
}

.ribbon-items {
  display: flex;
  gap: 32px;
  padding-left: 3px;
}

.ribbon-item {
  display: grid;
  justify-items: center;
  gap: 1px;
  margin-top: -4px;
}

.ribbon-item svg {
  width: 46px;
  height: 48px;
  margin-left: 8px;
}

.ribbon-item:last-child svg {
  margin-left: 0;
}

.ribbon-caption {
  padding: 0 0 2px 50px;
}

.workspace {
  flex: 1;
  min-height: 0;
  display: flex;
  margin-right: 6px;
}

.side {
  flex: 0 0 180px;
  display: flex;
  flex-direction: column;
  gap: 4px;
  overflow: hidden;
}

.dock {
  border: 1px solid #999ca1;
  background: #e7e9eb;
}

.side .dock {
  border-left: 0;
}

.dock-title {
  display: flex;
  align-items: center;
  height: 21px;
  padding: 0 11px 2px 8px;
}

.close {
  width: 12px;
  height: 12px;
  margin-left: auto;
}

.close svg {
  fill: none;
  stroke: #000;
  stroke-width: 1.5;
}

.pale {
  height: 28px;
}

.pale .close svg {
  stroke: #fff;
  stroke-width: 2;
}

.tree-dock {
  flex: 1;
  min-height: 0;
  display: flex;
  flex-direction: column;
}

.tree-area {
  flex: 1;
  display: flex;
  background: #f7f7f7;
}

.tree {
  flex: 0 0 204px;
  margin-left: -40px;
  padding-top: 12px;
  font-family: 'Noto Sans', 'Noto Sans CJK SC', sans-serif;
}

.tree li {
  display: flex;
  align-items: center;
  gap: 6px;
  height: 26px;
  border: 1px solid transparent;
  white-space: nowrap;
}

.tree svg {
  width: 16px;
  height: 16px;
}

.level-1 {
  padding-left: 19px;
}

.level-2 {
  padding-left: 39px;
}

.level-3 {
  padding-left: 37px;
}

.tree .selected {
  border-color: #6688bd;
  background: #b0cfff;
}

.tree-scroll {
  width: 8px;
  margin: 61px 0 2px;
  border-radius: 4px;
  background: #cacaca;
}

.props-dock {
  flex: 0 0 200px;
  display: flex;
  flex-direction: column;
  overflow: hidden;
}

.props-area {
  flex: 1;
  min-height: 0;
  display: flex;
  gap: 6px;
}

.props {
  flex: 0 0 165px;
  display: grid;
  grid-template-columns: 6px 138px;
  grid-auto-rows: 30px;
  gap: 10px 12px;
  align-items: center;
  padding-top: 10px;
  border: 1px solid #8d9094;
  border-width: 1px 1px 0 0;
  background: #f2f2f2;
}

.props label {
  justify-self: end;
  white-space: nowrap;
}

.field {
  grid-column: 2;
  width: 138px;
  height: 30px;
  border: 1px solid #cfcfcf;
  background: #fff;
}

.short {
  width: 98px;
}

input.field {
  padding: 0 4px;
}

input:disabled {
  background: #f0f0f0;
  color: #858585;
}

.apply {
  border-color: #77797c;
}

.props-scroll {
  width: 8px;
  height: 108px;
  border-radius: 4px;
  background: #cacaca;
}

.combo {
  position: relative;
}

.combo select {
  width: 100%;
  height: 100%;
  padding: 0 3px;
  appearance: none;
}

.combo svg {
  position: absolute;
  inset: 0 0 0 auto;
  width: 23px;
  height: 100%;
  padding: 0 4px;
  border-left: 1px solid #b5b5b5;
  fill: none;
  stroke: #333;
  stroke-width: 1.4;
  pointer-events: none;
}

.center {
  flex: 1;
  min-width: 0;
  display: flex;
  flex-direction: column;
  gap: 4px;
}

.viewport {
  flex: 1;
  min-height: 0;
  display: flex;
  flex-direction: column;
  border: 1px solid #999ca1;
  border-width: 0 1px 1px 0;
}

.toolbar {
  flex: 0 0 28px;
  display: flex;
  align-items: center;
  gap: 10px;
  border-top: 1px solid #d8d9db;
  border-bottom: 1px solid #96989b;
  background: #f3f3f3;
}

.grip {
  width: 9px;
  height: 100%;
  border: 0 solid #e8e9eb;
  border-width: 2px 4px 2px 3px;
  background: repeating-linear-gradient(#aaa 0 2px, #e8e9eb 2px 4px);
}

.tool {
  width: 22px;
  height: 22px;
  margin-bottom: 2px;
}

.tool svg {
  width: 22px;
  height: 22px;
}

.tool-label {
  width: 31px;
  padding-bottom: 3px;
  white-space: nowrap;
}

.pressed {
  background: #a9cbf7;
  outline: 1px solid #5a93dd;
}

.wire {
  fill: none;
  stroke: #bdd2f4;
}

.divider {
  width: 1px;
  height: 20px;
  margin: 0 -2px;
  background: #88898b;
}

.canvas {
  position: relative;
  flex: 1;
  min-height: 0;
  background: linear-gradient(#f9f9f9, #e2e2e2);
}

.scene {
  width: 100%;
  height: 100%;
}

.axis-name {
  font: italic 20px 'Liberation Serif', serif;
}

.scale-text {
  font: 11px 'DejaVu Sans Mono', monospace;
}

.overlay {
  position: absolute;
  top: 12px;
  left: 12px;
  font-size: 13px;
}

.overlay b {
  font: 11px 'DejaVu Sans Mono', monospace;
}

.legend {
  display: flex;
  gap: 6px;
  margin: 18px 0 0 -2px;
}

.ramp {
  width: 21px;
  height: 181px;
  display: grid;
  border: 1px solid #111;
  background: linear-gradient(#ff2000, #ff7000 10%, #ffc400 20%, #d8e800 30%, #60e000 42%, #00d000 50%, #00e0a0 68%, #00d0f0 76%, #0090ff 85%, #0040ff 92%, #0010ff);
}

.ramp i + i {
  border-top: 1px solid #111;
}

.legend ol {
  margin-top: -6px;
  font: 11px/18px 'DejaVu Sans Mono', monospace;
}

.bottom {
  flex: 0 0 216px;
  min-height: 0;
  display: flex;
  gap: 4px;
}

.table-dock {
  flex: 1;
  min-width: 0;
  display: flex;
  flex-direction: column;
  padding: 0 5px;
}

.table-dock .dock-title {
  padding: 0 6px 2px 3px;
}

.table-area {
  flex: 1;
  display: flex;
  flex-direction: column;
  justify-content: space-between;
  background: #fff;
}

table {
  width: 522px;
  table-layout: fixed;
  border-collapse: collapse;
  font: 14px/20px 'Noto Sans', 'Noto Sans CJK SC', sans-serif;
}

th,
td {
  height: 24px;
  padding: 0 0 2px;
  border: 1px solid #d0d0d0;
  font-weight: 400;
  text-align: center;
}

thead th {
  height: 23px;
}

th {
  border-color: #808285;
  background: #eee;
}

.index {
  width: 41px;
}

.table-scroll {
  width: 71%;
  height: 8px;
  border-radius: 4px;
  background: #cacaca;
}

.chart-dock {
  flex: 0 0 600px;
  display: flex;
  flex-direction: column;
  background: #fff;
}

.chart-dock .dock-title {
  background: #e7e9eb;
}

.player {
  height: 30px;
  display: flex;
  margin-bottom: 7px;
  padding: 0 89px 0 14px;
  border: 1px solid #808285;
  background: #ebebeb;
}

.player-buttons,
.player-fields {
  display: flex;
  align-items: center;
  border: 0 solid #cfcfcf;
}

.player-buttons {
  width: 131px;
  gap: 31px;
  padding-left: 31px;
  border-width: 0 1px;
}

.player svg {
  width: 18px;
}

.player-fields {
  flex: 1;
  padding: 0 0 2px 28px;
  border-right-width: 1px;
  font-size: 14px;
}

.player .combo {
  width: 88px;
  height: 20px;
  margin-left: 11px;
  border: 1px solid #d2d2d2;
  background: #fff;
}

.player .combo svg {
  width: 19px;
  padding: 0 2px;
}

.small select {
  font: 12px 'DejaVu Sans Mono', 'Noto Sans CJK SC', monospace;
}

.second {
  margin-left: 29px;
}

.second span {
  font: 12px 'Liberation Mono', monospace;
}

.chart-card {
  height: 152px;
  margin: 0 4px;
  border-radius: 7px;
  box-shadow: 0 0 3px 1px #b4b4b4;
  background: #fff;
}

.chart-card svg {
  width: 100%;
  height: 100%;
}

.legend-text {
  fill: #333;
  font: 12px 'Noto Sans CJK SC', sans-serif;
}

.bold {
  font-weight: 700;
}

.mono {
  fill: #444;
  font: 10px 'DejaVu Sans Mono', monospace;
}

.statusbar {
  flex: 0 0 23px;
  background: #eaeaea;
}

.taskbar {
  flex: 0 0 41px;
  display: flex;
  border-top: 1px solid #606a70;
  background: linear-gradient(90deg, #22363f 60%, #1f3040 75%, #1b2442);
  color: #fff;
}

.apps {
  flex: 1;
  display: flex;
  margin-left: -29px;
}

.apps button {
  width: 49px;
  display: grid;
  place-items: center;
}

.apps svg {
  width: 24px;
  height: 24px;
}

.running {
  background: linear-gradient(#76a8dc, #76a8dc) bottom / 40px 2px no-repeat;
}

.running.current {
  background: linear-gradient(#76a8dc, #76a8dc) bottom / 100% 2px no-repeat #4a5b66;
}

.glyph {
  fill: #1c1c1c;
  font-family: 'Liberation Sans', sans-serif;
  font-weight: 700;
}

.italic {
  font-style: italic;
}

.white {
  fill: #fff;
}

.tray {
  width: 17px;
  display: flex;
  flex-direction: column;
  justify-content: space-between;
  background: #f0f0f0;
}

.tray button {
  height: 18px;
  display: grid;
  place-items: center;
}

.tray svg {
  width: 12px;
  fill: none;
  stroke: #444;
  stroke-width: 2;
}

.clock {
  width: 72px;
  display: grid;
  place-content: center;
  font: 12px/19px 'Noto Sans', sans-serif;
  text-align: center;
}
</style>
